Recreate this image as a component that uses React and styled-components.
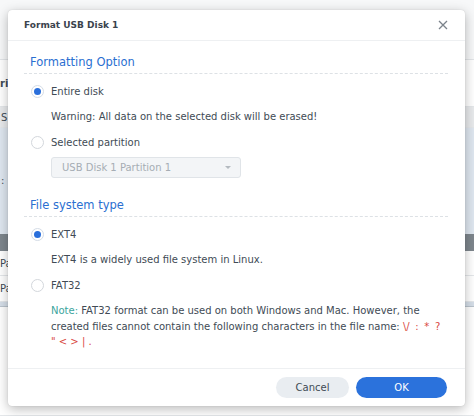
import styled, { createGlobalStyle } from "styled-components";

const GlobalStyle = createGlobalStyle`
	html, body {
		margin: 0;
		padding: 0;
		background: #fff;
	}
	body {
		font-family: "DejaVu Sans", Verdana, sans-serif;
		color: #414b55;
	}
`;

const Page = styled.div`
	width: 474px;
	height: 416px;
	position: relative;
	overflow: hidden;
	background: #fff;
`;

// the list that sits behind the modal, only its edges show
const Backdrop = styled.div`
	display: flex;
	flex-direction: column;
	height: 100%;
`;
const BackRow = styled.div`
	height: ${({ h }) => h}px;
	background: ${({ bg }) => bg || "#fff"};
	border-bottom: 1px solid ${({ line }) => line || "#e4e7ea"};
	display: flex;
	align-items: center;
	font-size: 10px;
	font-weight: ${({ bold }) => (bold ? 700 : 400)};
	color: #414b55;
	white-space: nowrap;
	padding-left: ${({ indent }) => indent || 0}px;
`;

const Dialog = styled.div`
	position: absolute;
	top: 10px;
	left: 8px;
	width: 457px;
	height: 396px;
	background: #fff;
	border-radius: 4px;
	box-shadow: 0 3px 12px rgba(0, 0, 0, 0.28), 0 0 1px rgba(0, 0, 0, 0.2);
	display: flex;
	flex-direction: column;
`;
const Header = styled.div`
	height: 30px;
	padding: 0 16px;
	border-bottom: 1px solid #eef0f2;
	display: flex;
	align-items: center;
	justify-content: space-between;
`;
const Title = styled.div`
	font-size: 9px;
	font-weight: 700;
	color: #3a434d;
`;
const Close = styled.button`
	width: 14px;
	height: 14px;
	padding: 0;
	margin-right: -1px;
	border: 0;
	background: none;
	display: flex;
	align-items: center;
	justify-content: center;
`;
const Body = styled.div`
	flex: 1;
	padding: 9px 17px 0 16px;
`;
const SectionTitle = styled.div`
	height: 23px;
	padding: 0 6px;
	border-bottom: 1px dashed #dde1e5;
	display: flex;
	align-items: center;
	font-size: 11.5px;
	color: #2a6fd1;
	margin-top: ${({ gap }) => gap || 0}px;
`;
const Options = styled.div`
	padding: 4px 0 0 7px;
	display: flex;
	flex-direction: column;
`;
const Option = styled.label`
	height: 26px;
	display: flex;
	align-items: center;
	gap: 7px;
	font-size: 10px;
`;
const Radio = styled.span`
	width: 13px;
	height: 13px;
	border-radius: 50%;
	box-sizing: border-box;
	border: 1px solid ${({ on }) => (on ? "#d4dce6" : "#d3d7dc")};
	background: #fff;
	display: flex;
	align-items: center;
	justify-content: center;
	&::after {
		content: "";
		width: 7px;
		height: 7px;
		border-radius: 50%;
		background: ${({ on }) => (on ? "#2a6fdb" : "transparent")};
	}
`;
const Hint = styled.div`
	height: 25px;
	padding-left: 20px;
	display: flex;
	align-items: center;
	font-size: 10px;
`;
const Select = styled.div`
	margin: 2px 0 0 20px;
	width: 190px;
	height: 21px;
	box-sizing: border-box;
	padding: 0 9px 0 10px;
	border: 1px solid #e0e4e8;
	border-radius: 3px;
	background: #f3f5f7;
	display: flex;
	align-items: center;
	justify-content: space-between;
	font-size: 10px;
	color: #a6adb4;
`;
const Caret = styled.span`
	width: 0;
	height: 0;
	border-left: 3px solid transparent;
	border-right: 3px solid transparent;
	border-top: 3px solid #b4bac0;
`;
const Note = styled.p`
	margin: 5px 0 0 20px;
	font-size: 10px;
	line-height: 15.5px;
`;
const NoteLabel = styled.span`
	color: #3aa59d;
`;
const Bad = styled.span`
	color: #d9483f;
	word-spacing: ${({ loose }) => (loose ? 2.5 : 0)}px;
`;
const Footer = styled.div`
	height: 37px;
	border-top: 1px solid #eef0f2;
	padding: 0 18px;
	display: flex;
	align-items: center;
	justify-content: flex-end;
	gap: 7px;
`;
const Button = styled.button`
	width: ${({ w }) => w}px;
	height: 21px;
	border: 0;
	border-radius: 11px;
	font-family: inherit;
	font-size: 10px;
	background: ${({ primary }) => (primary ? "#2b72dc" : "#e9edf1")};
	color: ${({ primary }) => (primary ? "#fff" : "#414b55")};
`;

const rows = [
	{ h: 60, bg: "#f7f8f9", line: "#e2e5e8" },
	{ h: 47, text: "ri", bold: true },
	{ h: 20, bg: "#e8eaec", text: "S", indent: 1 },
	{ h: 107, bg: "#dfe7f0", line: "#dfe7f0", text: ":", indent: 1 },
	{ h: 16, bg: "#7e868d", line: "#7e868d" },
	{ h: 25, text: "Pa" },
	{ h: 25, text: "Pa" },
	{ h: 4, bg: "#d5dee8", line: "#b9c3cc" },
	{ h: 110 },
];

function RadioOption({ on, children }) {
	return (
		<Option>
			<Radio on={on} />
			{children}
		</Option>
	);
}

export default function App() {
	return (
		<Page>
			<GlobalStyle />
			<Backdrop>
				{rows.map((r, i) => (
					<BackRow key={i} {...r}>{r.text}</BackRow>
				))}
			</Backdrop>
			<Dialog>
				<Header>
					<Title>Format USB Disk 1</Title>
					<Close>
						<svg width="10" height="10" viewBox="0 0 10 10">
							<path d="M1 1 L9 9 M9 1 L1 9" stroke="#7b838b" strokeWidth="1.3" fill="none" />
						</svg>
					</Close>
				</Header>
				<Body>
					<SectionTitle>Formatting Option</SectionTitle>
					<Options>
						<RadioOption on>Entire disk</RadioOption>
						<Hint>Warning: All data on the selected disk will be erased!</Hint>
						<RadioOption>Selected partition</RadioOption>
						<Select>
							USB Disk 1 Partition 1
							<Caret />
						</Select>
					</Options>
					<SectionTitle gap={15}>File system type</SectionTitle>
					<Options>
						<RadioOption on>EXT4</RadioOption>
						<Hint>EXT4 is a widely used file system in Linux.</Hint>
						<RadioOption>FAT32</RadioOption>
						<Note>
							<NoteLabel>Note:</NoteLabel> FAT32 format can be used on both Windows and Mac. However, the
							<br />
							created files cannot contain the following characters in the file name: <Bad loose>\/ : * ?</Bad>
							<br />
							<Bad>" &lt; &gt; | .</Bad>
						</Note>
					</Options>
				</Body>
				<Footer>
					<Button w={73}>Cancel</Button>
					<Button w={91} primary>OK</Button>
				</Footer>
			</Dialog>
		</Page>
	);
}
